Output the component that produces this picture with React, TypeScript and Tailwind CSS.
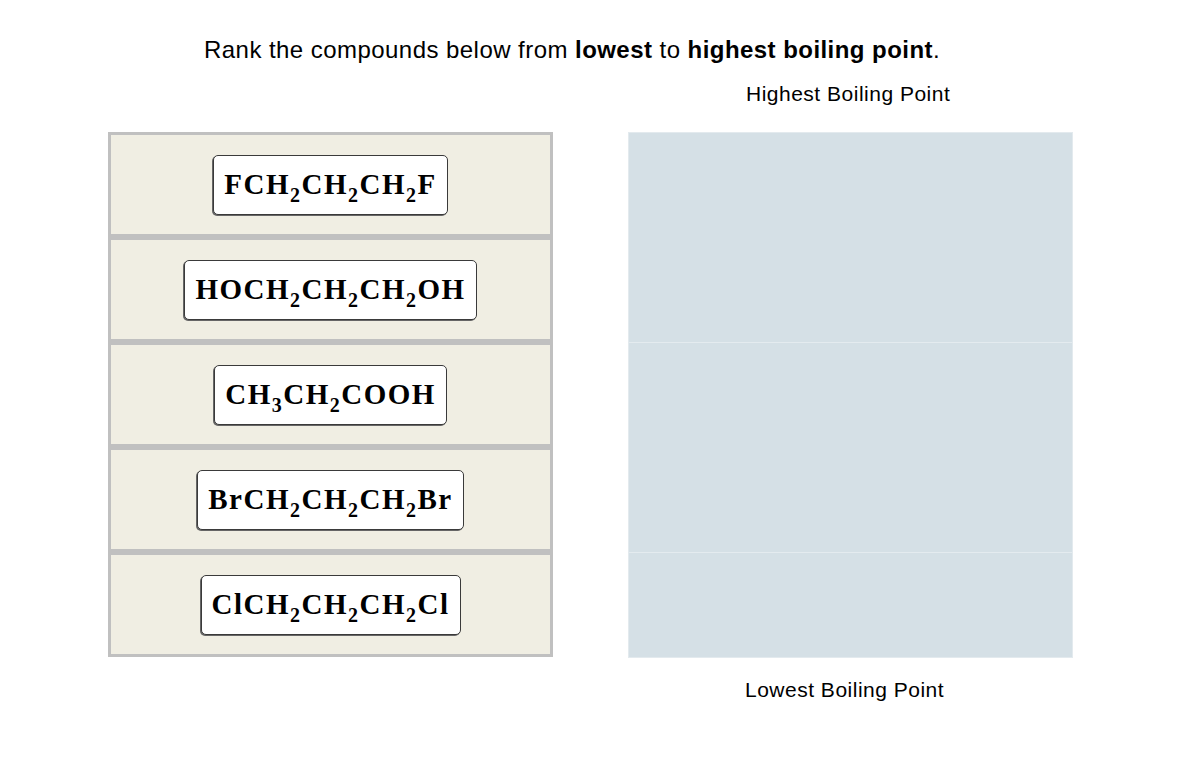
import React from "react";

type Part = { t: string; sub?: boolean };

const compounds: Part[][] = [
  [{ t: "FCH" }, { t: "2", sub: true }, { t: "CH" }, { t: "2", sub: true }, { t: "CH" }, { t: "2", sub: true }, { t: "F" }],
  [{ t: "HOCH" }, { t: "2", sub: true }, { t: "CH" }, { t: "2", sub: true }, { t: "CH" }, { t: "2", sub: true }, { t: "OH" }],
  [{ t: "CH" }, { t: "3", sub: true }, { t: "CH" }, { t: "2", sub: true }, { t: "COOH" }],
  [{ t: "BrCH" }, { t: "2", sub: true }, { t: "CH" }, { t: "2", sub: true }, { t: "CH" }, { t: "2", sub: true }, { t: "Br" }],
  [{ t: "ClCH" }, { t: "2", sub: true }, { t: "CH" }, { t: "2", sub: true }, { t: "CH" }, { t: "2", sub: true }, { t: "Cl" }],
];

function Formula({ parts }: { parts: Part[] }) {
  return (
    <div className="bg-white border border-[#3a3a3a] rounded-[5px] shadow-[-1px_1px_0_#666] h-[60px] px-[10px] flex items-center">
      <span className="font-['Liberation_Serif',serif] font-bold text-[29px] leading-none tracking-[1.5px] text-black whitespace-nowrap">
        {parts.map((p, i) =>
          p.sub ? (
            <span key={i} className="relative top-[8px] text-[20px]">
              {p.t}
            </span>
          ) : (
            <span key={i}>{p.t}</span>
          )
        )}
      </span>
    </div>
  );
}

export default function App() {
  return (
    <div className="w-[1196px] h-[762px] bg-white font-['Liberation_Sans',Arial,sans-serif] text-black">
      <p className="pl-[204px] pt-[35px] text-[24px] leading-[30px] tracking-[0.45px]">
        Rank the compounds below from <b>lowest</b> to <b>highest boiling point</b>.
      </p>
      <p className="pl-[746px] pt-[16px] text-[21px] leading-[26px] tracking-[0.5px]">Highest Boiling Point</p>

      <div className="flex gap-[75px] pl-[108px] pt-[25px]">
        <div className="w-[445px] flex flex-col">
          {compounds.map((c, i) => (
            <div
              key={i}
              className="h-[105px] border-[3px] border-[#c0c0c0] bg-[#f0eee3] flex items-center justify-center"
            >
              <Formula parts={c} />
            </div>
          ))}
        </div>

        <div className="w-[445px] h-[526px] bg-[#d5e0e6] border border-[#e3eaee] flex flex-col">
          <div className="h-[210px] border-b border-[#e4ebef]" />
          <div className="h-[210px] border-b border-[#e4ebef]" />
          <div className="flex-1" />
        </div>
      </div>

      <p className="pl-[745px] pt-[19px] text-[21px] leading-[26px] tracking-[0.5px]">Lowest Boiling Point</p>
    </div>
  );
}
